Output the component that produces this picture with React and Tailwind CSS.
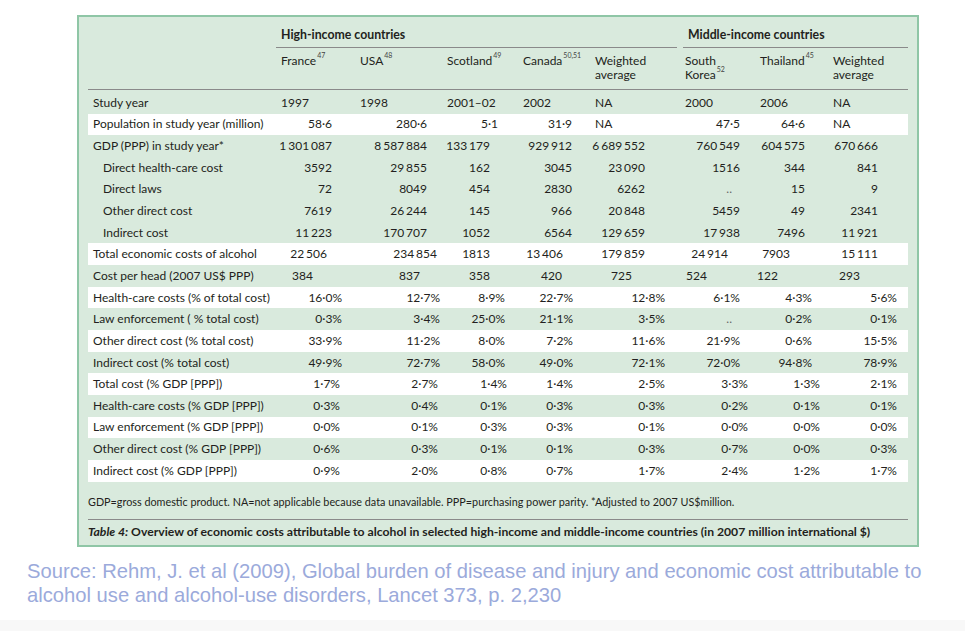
import React from 'react';

const NUM = ['pr-[28px]', 'pr-[20px]', 'pr-[33px]', 'pr-[23px]', 'pr-[40px]', 'pr-[20px]', 'pr-[28px]', 'pr-[30px]'];
const PCT = ['pr-[18px]', 'pr-[7px]', 'pr-[18px]', 'pr-[22px]', 'pr-[20px]', 'pr-[20px]', 'pr-[21px]', 'pr-[11px]'];
const GP = ['pr-[20px]', 'pr-[9px]', 'pr-[16px]', 'pr-[22px]', 'pr-[20px]', 'pr-[12px]', 'pr-[13px]', 'pr-[11px]'];
const TOT = ['pr-[33px]', 'pr-[10px]', 'pr-[33px]', 'pr-[32px]', 'pr-[40px]', 'pr-[32px]', 'pr-[43px]', 'pr-[30px]'];
const CPH = ['pr-[47px]', 'pr-[27px]', 'pr-[33px]', 'pr-[33px]', 'pr-[53px]', 'pr-[53px]', 'pr-[55px]', 'pr-[48px]'];
const POP = ['pr-[28px]', 'pr-[20px]', 'pr-[25px]', 'pr-[23px]', 'LEFT', 'pr-[20px]', 'pr-[28px]', 'LEFT'];
const LEFT = ['LEFT', 'LEFT', 'LEFT', 'LEFT', 'LEFT', 'LEFT', 'LEFT', 'LEFT'];

const rows = [
  { label: 'Study year', vals: ['1997', '1998', '2001–02', '2002', 'NA', '2000', '2006', 'NA'], pads: LEFT },
  { label: 'Population in study year (million)', white: true, vals: ['58·6', '280·6', '5·1', '31·9', 'NA', '47·5', '64·6', 'NA'], pads: POP },
  { label: 'GDP (PPP) in study year*', vals: ['1|301|087', '8|587|884', '133|179', '929|912', '6|689|552', '760|549', '604|575', '670|666'], pads: NUM },
  { label: 'Direct health-care cost', indent: true, vals: ['3592', '29|855', '162', '3045', '23|090', '1516', '344', '841'], pads: NUM },
  { label: 'Direct laws', indent: true, vals: ['72', '8049', '454', '2830', '6262', '..', '15', '9'], pads: NUM },
  { label: 'Other direct cost', indent: true, vals: ['7619', '26|244', '145', '966', '20|848', '5459', '49', '2341'], pads: NUM },
  { label: 'Indirect cost', indent: true, vals: ['11|223', '170|707', '1052', '6564', '129|659', '17|938', '7496', '11|921'], pads: NUM },
  { label: 'Total economic costs of alcohol', white: true, vals: ['22|506', '234|854', '1813', '13|406', '179|859', '24|914', '7903', '15|111'], pads: TOT },
  { label: 'Cost per head (2007 US$ PPP)', vals: ['384', '837', '358', '420', '725', '524', '122', '293'], pads: CPH },
  { label: 'Health-care costs (% of total cost)', white: true, vals: ['16·0%', '12·7%', '8·9%', '22·7%', '12·8%', '6·1%', '4·3%', '5·6%'], pads: PCT },
  { label: 'Law enforcement ( % total cost)', vals: ['0·3%', '3·4%', '25·0%', '21·1%', '3·5%', '..', '0·2%', '0·1%'], pads: PCT },
  { label: 'Other direct cost (% total cost)', white: true, vals: ['33·9%', '11·2%', '8·0%', '7·2%', '11·6%', '21·9%', '0·6%', '15·5%'], pads: PCT },
  { label: 'Indirect cost (% total cost)', vals: ['49·9%', '72·7%', '58·0%', '49·0%', '72·1%', '72·0%', '94·8%', '78·9%'], pads: PCT },
  { label: 'Total cost (% GDP [PPP])', white: true, vals: ['1·7%', '2·7%', '1·4%', '1·4%', '2·5%', '3·3%', '1·3%', '2·1%'], pads: GP },
  { label: 'Health-care costs (% GDP [PPP])', vals: ['0·3%', '0·4%', '0·1%', '0·3%', '0·3%', '0·2%', '0·1%', '0·1%'], pads: GP },
  { label: 'Law enforcement (% GDP [PPP])', white: true, vals: ['0·0%', '0·1%', '0·3%', '0·3%', '0·1%', '0·0%', '0·0%', '0·0%'], pads: GP },
  { label: 'Other direct cost (% GDP [PPP])', vals: ['0·6%', '0·3%', '0·1%', '0·1%', '0·3%', '0·7%', '0·0%', '0·3%'], pads: GP },
  { label: 'Indirect cost (% GDP [PPP])', white: true, vals: ['0·9%', '2·0%', '0·8%', '0·7%', '1·7%', '2·4%', '1·2%', '1·7%'], pads: GP },
];

const GRID = 'grid grid-cols-[193px_79px_87px_76px_72px_90px_75px_73px_75px]';

function Sup({ children }) {
  return <sup className="text-[7px] leading-none align-[4px] text-[#444] ml-[1px]">{children}</sup>;
}

function Num({ v }) {
  const parts = v.split('|');
  return (
    <span className="whitespace-nowrap">
      {parts.map((p, i) => (
        <span key={i} className={i > 0 ? 'ml-[2px]' : ''}>{p}</span>
      ))}
    </span>
  );
}

function Cell({ v, pad }) {
  if (v === '..') {
    return <div className="flex justify-end pr-[28px] text-[#666] whitespace-nowrap">..</div>;
  }
  if (pad === 'LEFT') {
    return <div className="flex justify-start whitespace-nowrap"><Num v={v} /></div>;
  }
  return <div className={`flex justify-end whitespace-nowrap ${pad}`}><Num v={v} /></div>;
}

export default function App() {
  return (
    <div className="w-[965px] h-[631px] bg-white flex flex-col font-['Lato',sans-serif] text-[#231f20]">
      <div className="pt-[15px] pl-[77px]">
        <div className="w-[842px] border-2 border-[#8fc6a6] bg-[#d9eadd] px-[9px] text-[12px]">
          {/* Group titles */}
          <div className={GRID}>
            <div />
            <div className="col-span-5 -ml-[5px] mr-[8px] border-b border-[#8a8a8a] pt-[11px] pb-[5px] pl-[5px] leading-[14px] font-bold text-[12.3px]">
              High-income countries
            </div>
            <div className="col-span-3 ml-[-2px] border-b border-[#8a8a8a] pt-[11px] pb-[5px] pl-[5px] leading-[14px] font-bold text-[12.3px]">
              Middle-income countries
            </div>
          </div>
          {/* Column headers */}
          <div className={`${GRID} border-b border-[#8a8a8a] pt-[6px] pb-[7px] leading-[14px]`}>
            <div />
            <div>France<Sup>47</Sup></div>
            <div>USA<Sup>48</Sup></div>
            <div>Scotland<Sup>49</Sup></div>
            <div>Canada<Sup>50,51</Sup></div>
            <div>Weighted<br />average</div>
            <div>South<br />Korea<Sup>52</Sup></div>
            <div>Thailand<Sup>45</Sup></div>
            <div>Weighted<br />average</div>
          </div>
          {/* Body */}
          <div className="mt-[2px]">
            {rows.map((r, i) => (
              <div
                key={i}
                className={`${GRID} h-[21.65px] items-center ${r.white ? 'bg-white' : ''}`}
              >
                <div className={`whitespace-nowrap ${r.indent ? 'pl-[15px]' : 'pl-[5px]'}`}>{r.label}</div>
                {r.vals.map((v, j) => (
                  <Cell key={j} v={v} pad={r.pads[j]} />
                ))}
              </div>
            ))}
          </div>
          {/* Footnote */}
          <div className="pt-[13px] pb-[10px] border-b border-[#8a8a8a] text-[10.8px] leading-[14px] whitespace-nowrap">
            GDP=gross domestic product. NA=not applicable because data unavailable. PPP=purchasing power parity. *Adjusted to 2007 US$million.
          </div>
          <div className="pt-[5px] pb-[6px] text-[12.2px] leading-[14px] font-bold whitespace-nowrap">
            <span className="italic">Table 4:</span> Overview of economic costs attributable to alcohol in selected high-income and middle-income countries (in 2007 million international $)
          </div>
        </div>
      </div>
      <div className="pl-[27px] pt-[12px] font-['Liberation_Sans',Arial,sans-serif] text-[20.2px] leading-[24px] text-[#9baadb] whitespace-nowrap">
        Source: Rehm, J. et al (2009), Global burden of disease and injury and economic cost attributable to
        <br />
        alcohol use and alcohol-use disorders, Lancet 373, p. 2,230
      </div>
      <div className="mt-auto h-[11px] bg-[#f8f8f8]" />
    </div>
  );
}
